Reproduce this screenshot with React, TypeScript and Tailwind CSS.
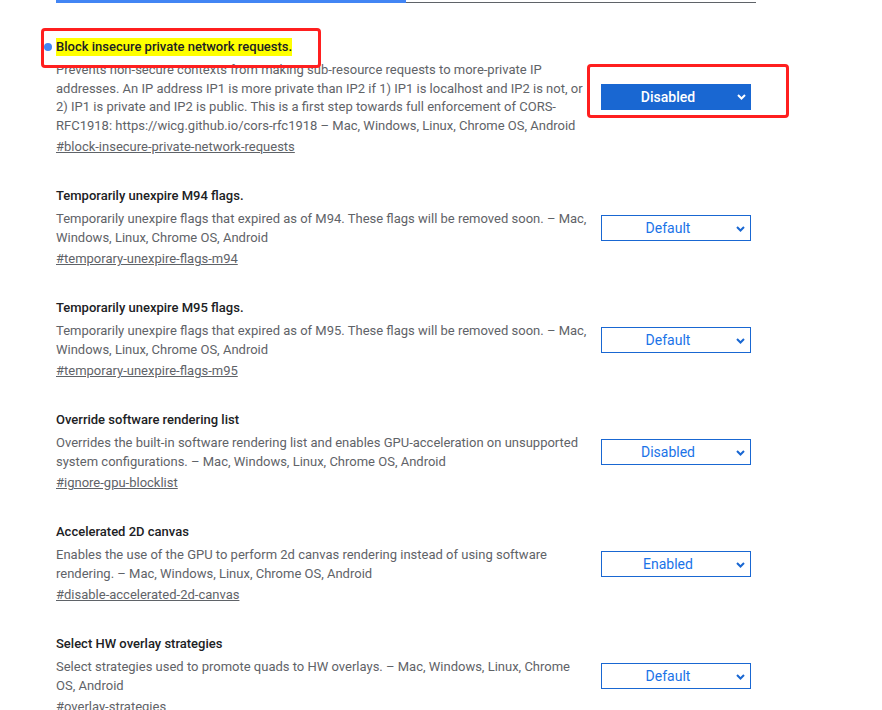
import React from 'react';

type Flag = {
  title: string;
  desc: string;
  link: string;
  value: string;
  highlighted?: boolean;
};

const flags: Flag[] = [
  {
    title: 'Block insecure private network requests.',
    desc: 'Prevents non-secure contexts from making sub-resource requests to more-private IP addresses. An IP address IP1 is more private than IP2 if 1) IP1 is localhost and IP2 is not, or 2) IP1 is private and IP2 is public. This is a first step towards full enforcement of CORS-RFC1918: https://wicg.github.io/cors-rfc1918 – Mac, Windows, Linux, Chrome OS, Android',
    link: '#block-insecure-private-network-requests',
    value: 'Disabled',
    highlighted: true,
  },
  {
    title: 'Temporarily unexpire M94 flags.',
    desc: 'Temporarily unexpire flags that expired as of M94. These flags will be removed soon. – Mac, Windows, Linux, Chrome OS, Android',
    link: '#temporary-unexpire-flags-m94',
    value: 'Default',
  },
  {
    title: 'Temporarily unexpire M95 flags.',
    desc: 'Temporarily unexpire flags that expired as of M95. These flags will be removed soon. – Mac, Windows, Linux, Chrome OS, Android',
    link: '#temporary-unexpire-flags-m95',
    value: 'Default',
  },
  {
    title: 'Override software rendering list',
    desc: 'Overrides the built-in software rendering list and enables GPU-acceleration on unsupported system configurations. – Mac, Windows, Linux, Chrome OS, Android',
    link: '#ignore-gpu-blocklist',
    value: 'Disabled',
  },
  {
    title: 'Accelerated 2D canvas',
    desc: 'Enables the use of the GPU to perform 2d canvas rendering instead of using software rendering. – Mac, Windows, Linux, Chrome OS, Android',
    link: '#disable-accelerated-2d-canvas',
    value: 'Enabled',
  },
  {
    title: 'Select HW overlay strategies',
    desc: 'Select strategies used to promote quads to HW overlays. – Mac, Windows, Linux, Chrome OS, Android',
    link: '#overlay-strategies',
    value: 'Default',
  },
];

const Chevron = ({ color }: { color: string }) => (
  <svg width="9" height="6" viewBox="0 0 9 6" className="absolute right-[5px] top-[10px]">
    <polyline points="1,1 4.5,4.5 8,1" fill="none" stroke={color} strokeWidth="2" />
  </svg>
);

const FlagSelect = ({ value, active }: { value: string; active?: boolean }) => (
  <div
    className={
      active
        ? 'relative h-[26px] w-[150px] bg-[#1967d2] text-white font-medium text-[14px] leading-[26px] text-center pr-[16px]'
        : 'relative h-[26px] w-[150px] border border-[#1967d2] text-[#1a73e8] text-[14px] leading-[24px] text-center pr-[16px]'
    }
  >
    {value}
    <Chevron color={active ? '#ffffff' : '#1967d2'} />
  </div>
);

export default function App() {
  return (
    <div className="relative w-[882px] h-[710px] overflow-hidden bg-white font-['Roboto',sans-serif] text-[13px]">
      {/* tab underline */}
      <div className="flex items-end ml-[56px] h-[3px]">
        <div className="w-[350px] h-[3px] bg-[#4285f4]" />
        <div className="w-[350px] h-[1px] bg-[#5f6368]" />
      </div>

      <div className="flex flex-col gap-[29px] pt-[34px]">
        {flags.map((f, i) => (
          <div key={i} className="flex items-center gap-[10px] pl-[56px]">
            <div className="w-[535px]">
              <div className="relative h-[20px] leading-[20px] font-medium text-[#202124]">
                {f.highlighted ? (
                  <>
                    <span className="absolute left-[-12px] top-[6px] w-[8px] h-[8px] rounded-full bg-[#4285f4]" />
                    <span className="inline-block bg-[#ffff00] leading-[18px] mt-[1px]">{f.title}</span>
                  </>
                ) : (
                  f.title
                )}
              </div>
              <p className="mt-[4px] leading-[18.5px] text-[#5f6368]">{f.desc}</p>
              <a className="block mt-[2px] leading-[20px] text-[#5f6368] underline">{f.link}</a>
            </div>
            <FlagSelect value={f.value} active={f.highlighted} />
          </div>
        ))}
      </div>

      {/* annotation boxes */}
      <div className="absolute left-[41px] top-[28px] w-[280px] h-[40px] border-[3px] border-[#ff1f1f] rounded-[4px]" />
      <div className="absolute left-[587px] top-[64px] w-[202px] h-[54px] border-[3px] border-[#ff1f1f] rounded-[4px]" />
    </div>
  );
}
